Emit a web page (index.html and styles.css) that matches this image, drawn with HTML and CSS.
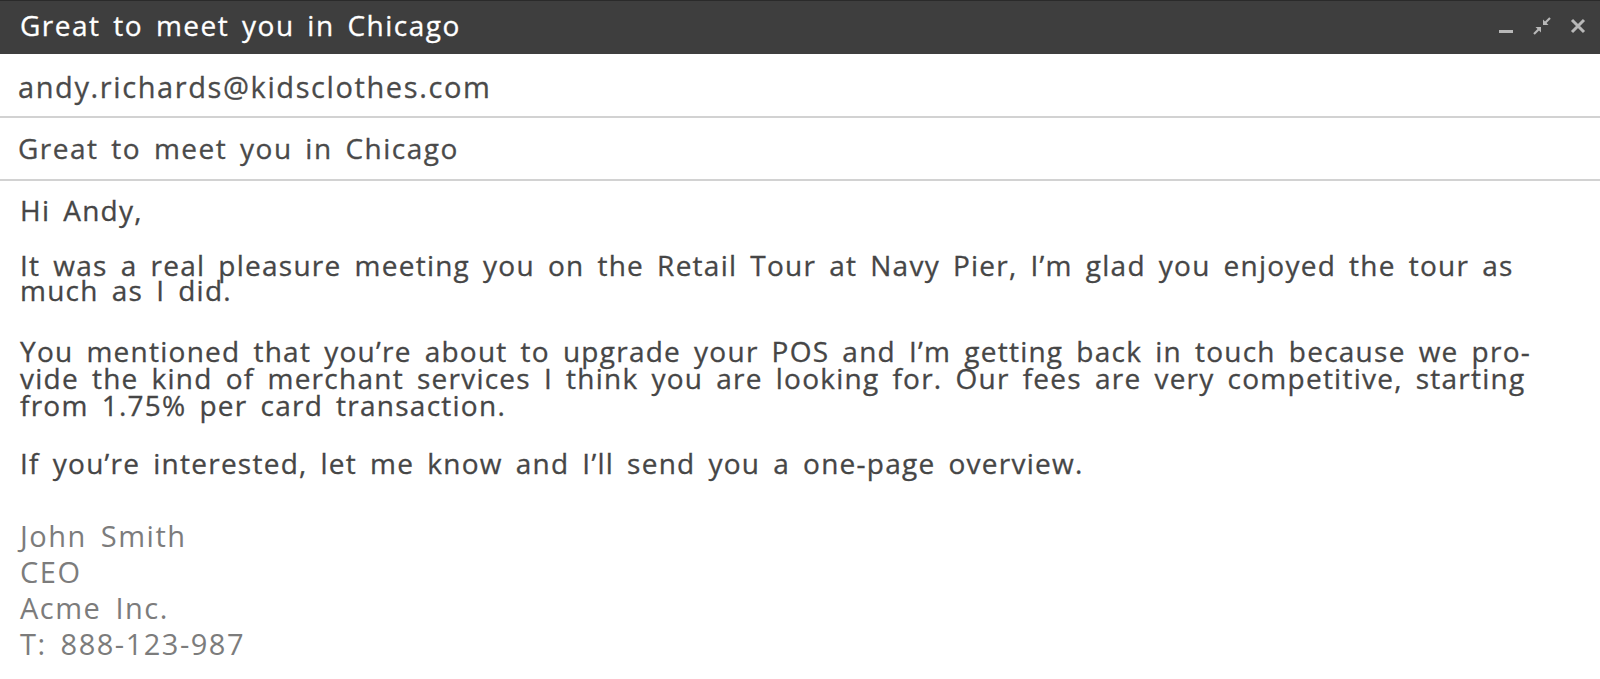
FILE: index.html
```html
<!DOCTYPE html>
<html lang="en">
<head>
<meta charset="utf-8">
<title>Great to meet you in Chicago</title>
<link rel="stylesheet" href="styles.css">
</head>
<body>
<div class="window">
  <header class="titlebar">
    <span class="title">Great to meet you in Chicago</span>
    <div class="controls">
      <svg class="ctl" width="16" height="16" viewBox="0 0 16 16"><rect x="1" y="12" width="14" height="3" fill="#b8b8b8"/></svg>
      <svg class="ctl" width="20" height="20" viewBox="0 0 20 20">
        <path d="M18 2 L12.5 7.5" stroke="#b8b8b8" stroke-width="2.2"/>
        <path d="M11 3.5 V9 H16.5 Z" fill="#b8b8b8"/>
        <path d="M2 18 L7.5 12.5" stroke="#b8b8b8" stroke-width="2.2"/>
        <path d="M9 16.5 V11 H3.5 Z" fill="#b8b8b8"/>
      </svg>
      <svg class="ctl" width="16" height="16" viewBox="0 0 16 16"><path d="M2 2 L14 14 M14 2 L2 14" stroke="#b8b8b8" stroke-width="3"/></svg>
    </div>
  </header>
  <div class="field to">andy.richards@kidsclothes.com</div>
  <div class="field subject">Great to meet you in Chicago</div>
  <div class="body">
    <p class="para greeting"><span class="line">Hi Andy,</span></p>
    <p class="para p-intro">
      <span class="line">It was a real pleasure meeting you on the Retail Tour at Navy Pier, I’m glad you enjoyed the tour as</span>
      <span class="line">much as I did.</span>
    </p>
    <p class="para p-offer">
      <span class="line">You mentioned that you’re about to upgrade your POS and I’m getting back in touch because we pro-</span>
      <span class="line">vide the kind of merchant services I think you are looking for. Our fees are very competitive, starting</span>
      <span class="line">from 1.75% per card transaction.</span>
    </p>
    <p class="para p-close"><span class="line">If you’re interested, let me know and I’ll send you a one-page overview.</span></p>
    <div class="signature">
      <span class="line">John Smith</span>
      <span class="line">CEO</span>
      <span class="line">Acme Inc.</span>
      <span class="line">T: 888-123-987</span>
    </div>
  </div>
</div>
</body>
</html>
```
FILE: styles.css
```css
html, body {
  margin: 0;
  padding: 0;
  background: #ffffff;
}
body {
  font-family: "Open Sans", "Noto Sans", "Liberation Sans", sans-serif;
  color: #464646;
}
.window {
  width: 1600px;
  display: flex;
  flex-direction: column;
}
.titlebar {
  height: 54px;
  background: #3e3e3e;
  border-top: 1px solid #2a2a2a;
  box-sizing: border-box;
  display: flex;
  align-items: center;
  justify-content: space-between;
  padding: 0 14px 0 20px;
}
.title {
  color: #ffffff;
  font-size: 28px;
  font-weight: 500;
  letter-spacing: 1.5px;
  word-spacing: 4px;
  padding-bottom: 6px;
  -webkit-text-stroke: 0.3px #ffffff;
}
.controls {
  display: flex;
  align-items: center;
  gap: 18px;
  padding-bottom: 4px;
}
.ctl {
  display: block;
}
.field {
  display: flex;
  align-items: center;
  padding: 0 18px;
  font-weight: 500;
  color: #4a4a4a;
  border-bottom: 2px solid #d2d2d2;
  box-sizing: border-box;
  -webkit-text-stroke: 0.3px #4a4a4a;
}
.to {
  height: 64px;
  padding-top: 2px;
  font-size: 29px;
  letter-spacing: 1.6px;
}
.subject {
  height: 63px;
  padding-bottom: 2px;
  font-size: 28px;
  letter-spacing: 1.5px;
  word-spacing: 4px;
}
.body {
  padding: 16px 20px 0;
}
.para {
  margin: 0;
  font-size: 28px;
  font-weight: 500;
  line-height: 26px;
  letter-spacing: 1.25px;
  word-spacing: 4.5px;
  color: #464646;
  -webkit-text-stroke: 0.3px #464646;
}
.greeting {
  margin-bottom: 30px;
}
.p-intro {
  line-height: 25px;
  margin-bottom: 35px;
}
.p-offer {
  line-height: 27px;
  margin-bottom: 31px;
}
.line {
  display: block;
  white-space: nowrap;
}
.signature {
  margin-top: 42px;
  font-size: 29px;
  line-height: 36px;
  letter-spacing: 1.5px;
  word-spacing: 5px;
  color: #7c7c7c;
}
```
